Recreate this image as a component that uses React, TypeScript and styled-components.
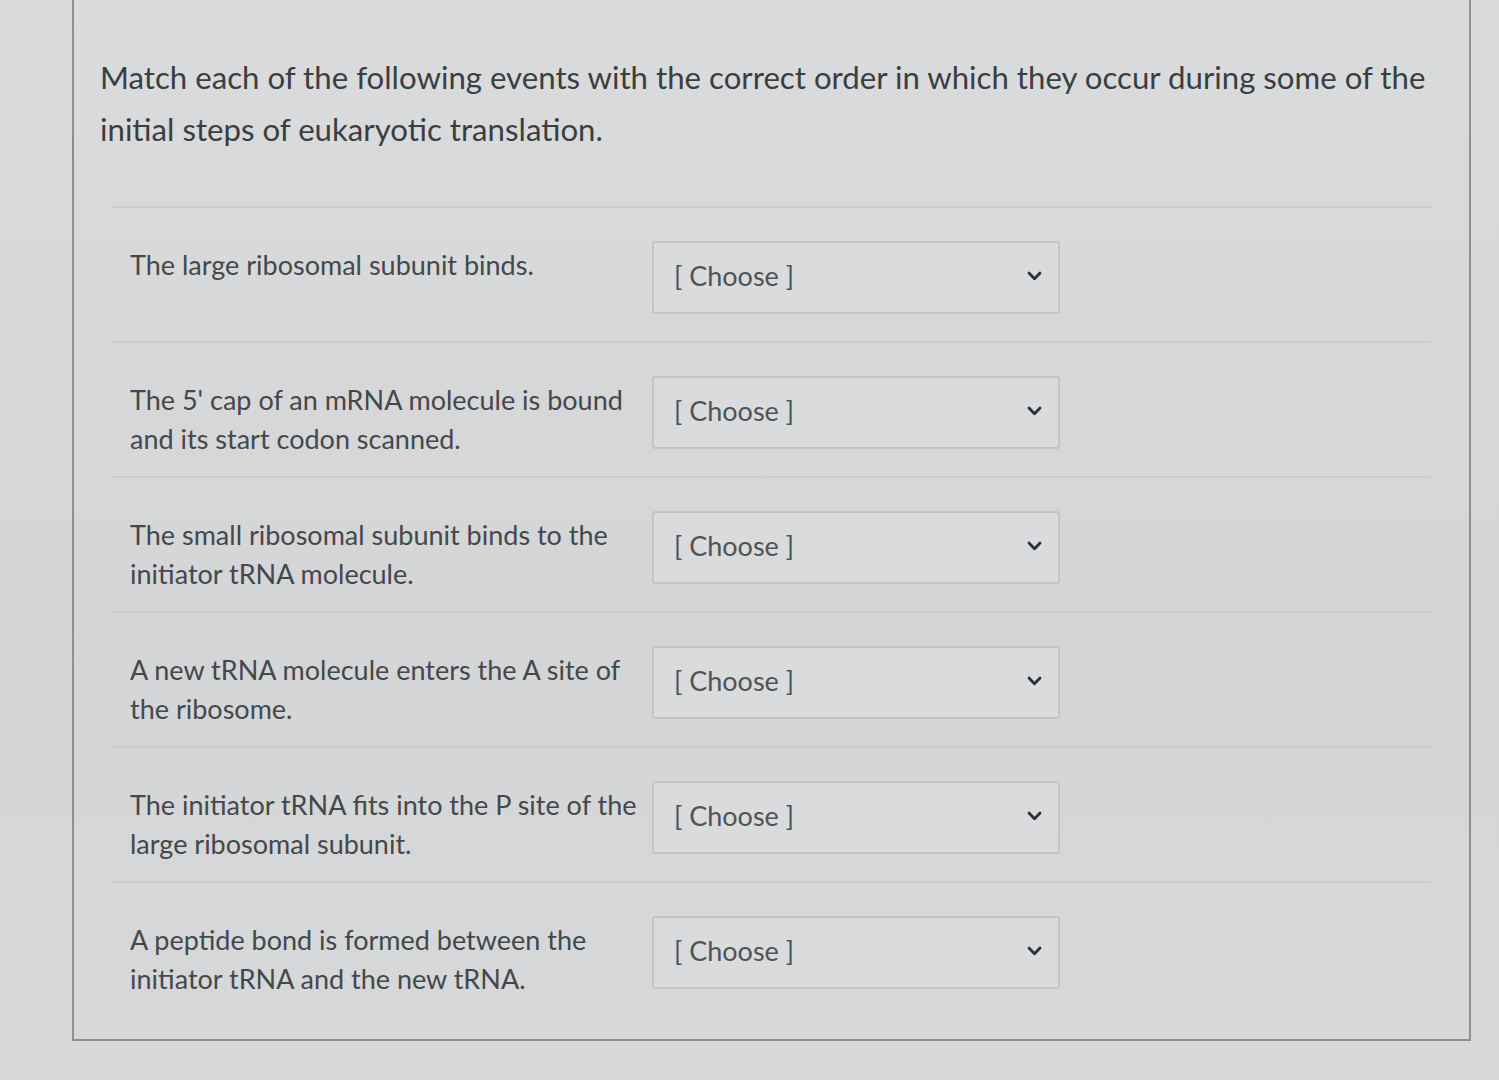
import React from "react";
import styled, { createGlobalStyle } from "styled-components";

const GlobalStyle = createGlobalStyle`
    html, body {
        margin: 0;
        padding: 0;
        background: #d4d6d7;
        font-family: Lato, "Open Sans", "Liberation Sans", sans-serif;
    }
`;

const Page = styled.div`
    width: 1499px;
    height: 1080px;
    overflow: hidden;
    box-sizing: border-box;
    padding: 0 28px 0 72px;
    background: linear-gradient(180deg, #d9dbdc 0%, #d3d5d6 60%, #d6d8d9 100%);
`;

const Frame = styled.div`
    box-sizing: border-box;
    height: 1041px;
    border: 2px solid #8e9193;
    border-top: none;
    padding: 51px 30px 0 26px;
    display: flex;
    flex-direction: column;
`;

const Question = styled.p`
    margin: 0 0 51px;
    font-size: 31.2px;
    line-height: 52px;
    color: #3b3e41;
`;

const Rows = styled.div`
    display: flex;
    flex-direction: column;
    margin: 0 8px 0 12px;
`;

const Row = styled.div`
    box-sizing: border-box;
    height: 135px;
    display: grid;
    grid-template-columns: 522px 408px;
    align-items: start;
    border-top: 2px solid #c9cbcc;
    padding: 33px 0 0 18px;
`;

const Label = styled.div`
    padding-top: 4px;
    max-width: 512px;
    font-size: 27px;
    line-height: 39px;
    color: #45484b;
`;

const Select = styled.div`
    box-sizing: border-box;
    height: 73px;
    display: flex;
    align-items: center;
    justify-content: space-between;
    padding: 0 16px 4px 20px;
    border: 2px solid #c2c4c6;
    border-radius: 3px;
    background: #d9dbdc;
    font-size: 27px;
    color: #505356;
`;

const Chevron = () => (
    <svg width="15" height="10" viewBox="0 0 15 10">
        <polyline points="2,2 7.5,7.8 13,2" fill="none" stroke="#2b313b" strokeWidth="2.8" strokeLinecap="round" strokeLinejoin="round" />
    </svg>
);

const events = [
    "The large ribosomal subunit binds.",
    "The 5' cap of an mRNA molecule is bound and its start codon scanned.",
    "The small ribosomal subunit binds to the initiator tRNA molecule.",
    "A new tRNA molecule enters the A site of the ribosome.",
    "The initiator tRNA fits into the P site of the large ribosomal subunit.",
    "A peptide bond is formed between the initiator tRNA and the new tRNA."
];

export default function App() {
    return (
        <>
            <GlobalStyle />
            <Page>
                <Frame>
                    <Question>
                        Match each of the following events with the correct order in which they occur during some of the initial steps of eukaryotic translation.
                    </Question>
                    <Rows>
                        {events.map((text, index) => (
                            <Row key={index}>
                                <Label>{text}</Label>
                                <Select>
                                    <span>[ Choose ]</span>
                                    <Chevron />
                                </Select>
                            </Row>
                        ))}
                    </Rows>
                </Frame>
            </Page>
        </>
    );
}
